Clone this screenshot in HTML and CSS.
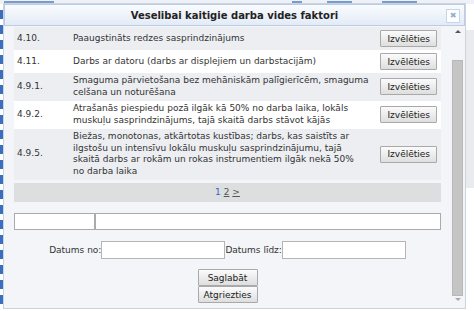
FILE: index.html
```html
<!DOCTYPE html>
<html>
<head>
<meta charset="utf-8">
<link rel="stylesheet" href="styles.css">
</head>
<body>
<div class="page">
  <div class="topnav"><span class="m1"></span><span class="m2"></span><span class="m3"></span><span class="m4"></span></div>
  <div class="pagebody">
    <div class="side"><span></span><span></span><span></span><span></span><span></span><span></span><span></span><span></span><span></span><span></span><span></span><span></span><span></span><span></span><span></span><span></span><span></span><span></span><span></span><span></span></div>
    <div class="main"></div>
    <div class="rightstrip"></div>
  </div>
</div>

<div class="dialog">
  <div class="titlebar">
    <span class="title">Veselibai kaitigie darba vides faktori</span>
    <span class="close">&#x2716;</span>
  </div>
  <div class="body">
    <div class="content">
      <table class="grid">
        <tr class="odd">
          <td class="num">4.10.</td>
          <td class="desc">Paaugstināts redzes sasprindzinājums</td>
          <td class="act"><button class="btn">Izvēlēties</button></td>
        </tr>
        <tr class="even">
          <td class="num">4.11.</td>
          <td class="desc">Darbs ar datoru (darbs ar displejiem un darbstacijām)</td>
          <td class="act"><button class="btn">Izvēlēties</button></td>
        </tr>
        <tr class="odd">
          <td class="num">4.9.1.</td>
          <td class="desc">Smaguma pārvietošana bez mehāniskām palīgierīcēm, smaguma celšana un noturēšana</td>
          <td class="act"><button class="btn">Izvēlēties</button></td>
        </tr>
        <tr class="even">
          <td class="num">4.9.2.</td>
          <td class="desc">Atrašanās piespiedu pozā ilgāk kā 50% no darba laika, lokāls muskuļu sasprindzinājums, tajā skaitā darbs stāvot kājās</td>
          <td class="act"><button class="btn">Izvēlēties</button></td>
        </tr>
        <tr class="odd">
          <td class="num">4.9.5.</td>
          <td class="desc">Biežas, monotonas, atkārtotas kustības; darbs, kas saistīts ar ilgstošu un intensīvu lokālu muskuļu sasprindzinājumu, tajā skaitā darbs ar rokām un rokas instrumentiem ilgāk nekā 50% no&nbsp;darba laika</td>
          <td class="act"><button class="btn">Izvēlēties</button></td>
        </tr>
      </table>
      <div class="pager"><span class="cur">1</span> <a>2</a> <a>&gt;</a></div>
      <div class="inputs"><input class="in1" type="text"><input class="in2" type="text"></div>
      <div class="dates">
        <label>Datums no:</label><input class="date" type="text"><label>Datums līdz:</label><input class="date" type="text">
      </div>
      <div class="actions">
        <button class="btn wide">Saglabāt</button>
        <button class="btn wide">Atgriezties</button>
      </div>
    </div>
    <div class="scrollbar">
      <span class="arrow up"></span>
      <div class="track"><div class="thumb"></div></div>
      <span class="arrow down"></span>
    </div>
  </div>
</div>
</body>
</html>
```

FILE: styles.css
```css
html, body {
  margin: 0;
  padding: 0;
  background: #ffffff;
  font-family: "DejaVu Sans", Verdana, sans-serif;
  font-size: 9px;
  color: #333;
  width: 474px;
  height: 311px;
  overflow: hidden;
}

.page {
  display: flex;
  flex-direction: column;
  height: 311px;
}

.topnav {
  display: flex;
  height: 4px;
  align-items: flex-start;
  background: #eef2f8;
}
.topnav span {
  height: 2px;
  margin-top: 1px;
  background: #5a84c6;
  opacity: 0.8;
}
.topnav .m1 { width: 50px; margin-left: 4px; }
.topnav .m2 { width: 10px; margin-left: 238px; }
.topnav .m3 { width: 25px; margin-left: 25px; }
.topnav .m4 { width: 35px; margin-left: 30px; }

.pagebody {
  flex: 1;
  display: flex;
}
.side {
  width: 4px;
  display: flex;
  flex-direction: column;
  gap: 6px;
  padding-top: 6px;
}
.side span {
  height: 9px;
  background: #3a6fbf;
}
.main { flex: 1; }
.rightstrip {
  width: 8px;
  margin-top: 26px;
  height: 158px;
  background: #e9ebee;
}

.dialog {
  position: absolute;
  left: 3px;
  top: 3px;
  width: 461px;
  height: 304px;
  border: 1px solid #cdd3da;
  background: #f3f5f8;
  display: flex;
  flex-direction: column;
}

.titlebar {
  height: 20px;
  border: 1px solid #b9cde6;
  background: linear-gradient(#f9fbfe, #e3ebf6);
  display: flex;
  align-items: center;
  justify-content: center;
  position: relative;
}
.title {
  font-weight: bold;
  font-size: 10px;
  color: #222;
}
.close {
  position: absolute;
  right: 4px;
  top: 4px;
  width: 12px;
  height: 12px;
  border: 1px solid #c6d6ea;
  background: #fff;
  color: #8fb0d6;
  font-size: 8px;
  line-height: 12px;
  text-align: center;
}

.body {
  flex: 1;
  display: flex;
  min-height: 0;
}
.content {
  flex: 1;
  padding-left: 10px;
  padding-right: 11px;
  padding-top: 1px;
}

.grid {
  width: 100%;
  border-collapse: collapse;
  line-height: 11.9px;
}
.grid td {
  padding: 2px 3px;
  vertical-align: middle;
}
.grid tr.odd { background: #eceef1; }
.grid tr.even { background: #ffffff; }
.num { width: 50px; }
.act { width: 62px; text-align: right; }

.btn {
  font-family: "DejaVu Sans", Verdana, sans-serif;
  font-size: 9px;
  color: #222;
  height: 17px;
  padding: 0 6px;
  margin: 1px 1px;
  border: 1px solid #a9a9a9;
  border-radius: 1px;
  background: linear-gradient(#fbfbfb, #dedede);
}

.pager {
  margin-top: 3px;
  height: 19px;
  line-height: 19px;
  background: #dcdee0;
  text-align: center;
  color: #333;
}
.pager .cur { color: #3668b8; }
.pager a { text-decoration: underline; color: #555; }

.inputs {
  display: flex;
  margin-top: 11px;
}
.inputs input {
  height: 17px;
  box-sizing: border-box;
  border: 1px solid #ababab;
  background: #fff;
  margin: 0;
  padding: 0;
}
.in1 { width: 81px; }
.in2 { flex: 1; width: 0; }

.dates {
  display: flex;
  justify-content: center;
  align-items: center;
  margin-top: 11px;
  font-size: 9px;
  color: #333;
}
.date {
  width: 124px;
  height: 18px;
  box-sizing: border-box;
  border: 1px solid #b5b5b5;
  background: #fff;
  margin: 0;
  padding: 0;
}

.actions {
  display: flex;
  flex-direction: column;
  align-items: center;
  margin-top: 10px;
}
.actions .btn {
  width: 60px;
  margin: 0;
  padding: 0;
}

.scrollbar {
  width: 11px;
  margin-right: 2px;
  display: flex;
  flex-direction: column;
  align-items: center;
}
.arrow {
  width: 0;
  height: 0;
  border-left: 3px solid transparent;
  border-right: 3px solid transparent;
}
.arrow.up {
  border-bottom: 3px solid #555;
  margin-top: 4px;
}
.arrow.down {
  border-top: 3px solid #aaa;
  margin-bottom: 7px;
}
.track {
  flex: 1;
  width: 100%;
  padding-top: 27px;
  padding-bottom: 2px;
  display: flex;
}
.thumb {
  flex: 1;
  background: #c5c5c5;
  border: 1px solid #b8b8b8;
}
```
